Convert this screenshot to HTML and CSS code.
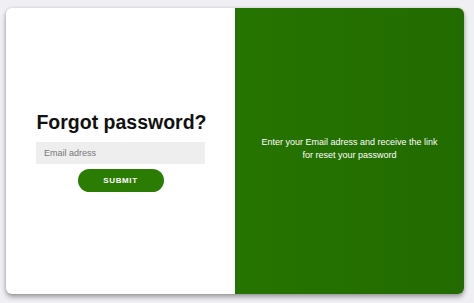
FILE: index.html
```html
<!DOCTYPE html>
<html>
<head>
<meta charset="utf-8">
<link rel="stylesheet" href="styles.css">
</head>
<body>
<div class="card">
  <div class="left">
    <h1 class="title">Forgot password?</h1>
    <input class="email" type="text" placeholder="Email adress">
    <button class="submit">SUBMIT</button>
  </div>
  <div class="right">
    <p class="info">Enter your Email adress and receive the link<br>for reset your password</p>
  </div>
</div>
</body>
</html>
```
FILE: styles.css
```css
html, body {
  margin: 0;
  padding: 0;
}
body {
  width: 474px;
  height: 303px;
  background: #f0f0f4;
  font-family: "Liberation Sans", Arial, sans-serif;
  padding: 8px 10px 9px 6px;
  box-sizing: border-box;
}
.card {
  display: flex;
  height: 286px;
  background: #fff;
  border-radius: 6px;
  overflow: hidden;
  box-shadow: 0 3px 5px rgba(0,0,0,0.35), 0 0 3px rgba(0,0,0,0.12);
}
.left {
  width: 229px;
  display: flex;
  flex-direction: column;
  align-items: center;
  padding-top: 102px;
  box-sizing: border-box;
}
.title {
  margin: 0 0 8px 0;
  font-size: 19.5px;
  font-weight: bold;
  color: #111;
  line-height: 24px;
  padding-left: 2px;
}
.email {
  width: 169px;
  height: 22px;
  border: none;
  background: #eeeeee;
  padding: 0 8px;
  box-sizing: border-box;
  font-family: "Liberation Sans", Arial, sans-serif;
  font-size: 9px;
  outline: none;
}
.email::placeholder {
  color: #777;
}
.submit {
  margin-top: 5px;
  width: 86px;
  height: 23px;
  border: none;
  border-radius: 12px;
  background: #2a7c02;
  color: #fff;
  font-family: "Liberation Sans", Arial, sans-serif;
  font-size: 8px;
  font-weight: bold;
  letter-spacing: 0.6px;
}
.right {
  flex: 1;
  display: flex;
  align-items: center;
  justify-content: center;
  background: linear-gradient(to right, #267400, #226b00);
}
.info {
  margin: 0;
  color: #fff;
  font-size: 9px;
  line-height: 13px;
  text-align: center;
  padding-bottom: 5px;
}
```
